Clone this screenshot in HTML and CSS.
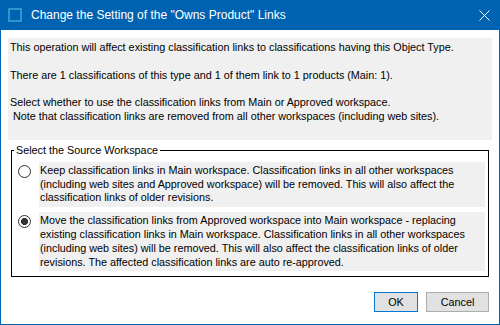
FILE: index.html
```html
<!DOCTYPE html>
<html>
    <head>
        <title>Change the Setting of the "Owns Product" Links</title>
        <meta name="viewport" content="width=device-width, initial-scale=1.0" />
        <link rel="stylesheet" href="styles.css">
    </head>
    <body>
        <div class="window">
            <div class="titlebar">
                <svg class="appIcon" width="14" height="14" viewBox="0 0 14 14">
                    <rect x="1" y="1" width="12" height="12" fill="none" stroke="#3aa6d4" stroke-width="1.6" />
                </svg>
                <span class="title">Change the Setting of the "Owns Product" Links</span>
                <svg class="closeIcon" width="11" height="11" viewBox="0 0 11 11">
                    <path d="M0.5 0.5 L10.5 10.5 M10.5 0.5 L0.5 10.5" stroke="#fff" stroke-width="1" />
                </svg>
            </div>

            <div class="info">
                <p>This operation will affect existing classification links to classifications having this Object Type.</p>
                <p>There are 1 classifications of this type and 1 of them link to 1 products (Main: 1).</p>
                <p>Select whether to use the classification links from Main or Approved workspace.<br />&nbsp;Note that classification links are removed from all other workspaces (including web sites).</p>
            </div>

            <fieldset class="group">
                <legend>Select the Source Workspace</legend>
                <label class="option">
                    <input type="radio" name="source" value="main" />
                    <span class="optionText">Keep classification links in Main workspace. Classification links in all other workspaces<br />(including web sites and Approved workspace) will be removed. This will also affect the<br />classification links of older revisions.</span>
                </label>
                <label class="option">
                    <input type="radio" name="source" value="approved" checked />
                    <span class="optionText">Move the classification links from Approved workspace into Main workspace - replacing<br />existing classification links in Main workspace. Classification links in all other workspaces<br />(including web sites) will be removed. This will also affect the classification links of older<br />revisions. The affected classification links are auto re-approved.</span>
                </label>
            </fieldset>

            <div class="buttons">
                <button class="btn btnDefault">OK</button>
                <button class="btn btnCancel">Cancel</button>
            </div>
        </div>
    </body>
</html>
```

FILE: styles.css
```css
body {
    margin: 0;
    background: #fff;
    font-family: "Liberation Sans", Arial, sans-serif;
    font-size: 10.8px;
    color: #000;
}

.window {
    box-sizing: border-box;
    width: 500px;
    height: 325px;
    border: 1px solid #0063b1;
    border-top: 0;
    background: #fff;
}

.titlebar {
    height: 30px;
    margin: 0 -1px;
    background: #0063b1;
    display: flex;
    align-items: center;
    color: #fff;
}

.appIcon {
    margin-left: 8px;
    margin-right: 9px;
}

.title {
    font-size: 12px;
    flex: 1;
    white-space: nowrap;
}

.closeIcon {
    margin-right: 10px;
}

.info {
    margin: 8px 7px 0 7px;
    height: 102px;
    box-sizing: border-box;
    padding: 3px 2px;
    background: #f0f0f0;
    line-height: 13.7px;
    white-space: nowrap;
}

.info p {
    margin: 0 0 14px 0;
}

.group {
    margin: 4px 10px 0 10px;
    padding: 4px 3px 5px 6px;
    border: 1px solid #000;
    line-height: 13.8px;
}

.group legend {
    margin-left: -4px;
    padding: 0 2px;
}

.option {
    display: flex;
    align-items: flex-start;
    gap: 8px;
    margin-bottom: 5px;
}

.option:last-child {
    margin-bottom: 0;
}

.option input {
    -webkit-appearance: none;
    appearance: none;
    flex: none;
    width: 13px;
    height: 13px;
    margin: 3px 0 0 0;
    border: 1px solid #333;
    border-radius: 50%;
    background: #fff;
}

.option input:checked {
    background: radial-gradient(circle, #333 0 3.3px, #fff 3.8px);
}

.optionText {
    flex: 1;
    padding: 2px 1px 2px 1px;
    background: #f0f0f0;
    white-space: nowrap;
}

.buttons {
    display: flex;
    justify-content: flex-end;
    gap: 8px;
    margin: 15px 10px 0 0;
}

.btn {
    height: 20px;
    padding: 0;
    border: 1px solid #adadad;
    background: #e1e1e1;
    font-family: inherit;
    font-size: 10.8px;
    color: #000;
}

.btnDefault {
    width: 44px;
    border-color: #0078d7;
}

.btnCancel {
    width: 63px;
}
```
